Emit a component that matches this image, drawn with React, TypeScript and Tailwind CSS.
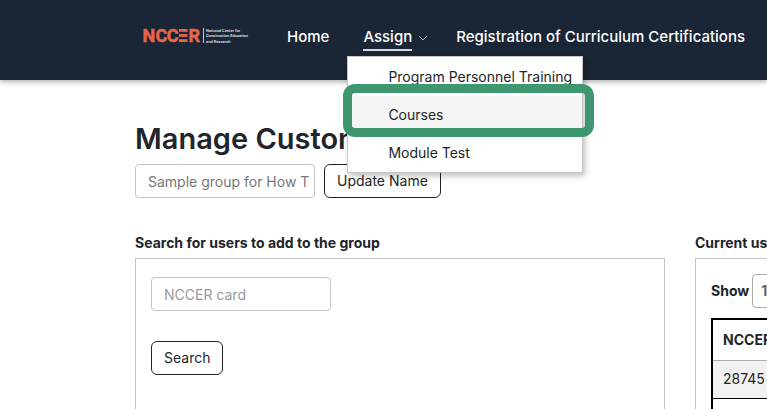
import { useState } from "react";

const ASSIGN_ITEMS = ["Program Personnel Training", "Courses", "Module Test"];

const Logo = () => (
  <svg width="108" height="28" viewBox="0 -4 108 28" role="img" aria-label="NCCER">
    <g
      fill="#e8654a"
      stroke="#e8654a"
      strokeWidth="0.5"
      fontFamily="Roboto, sans-serif"
      fontWeight="700"
      fontSize="18"
    >
      <text x="-0.5" y="17">N</text>
      <text x="12.5" y="17">C</text>
      <text x="23.8" y="17">C</text>
      <text x="45.5" y="17">R</text>
    </g>
    {/* The E is three loose bars */}
    <g fill="#e8654a">
      <rect x="36" y="4" width="8.5" height="2.8" />
      <rect x="36" y="9.1" width="8.5" height="2.8" />
      <rect x="36" y="14.2" width="8.5" height="2.8" />
    </g>
    <rect x="60" y="3" width="1" height="15" fill="#c3c8cf" />
    <g fill="#d5d9de" fontFamily="Roboto, sans-serif" fontWeight="700" fontSize="4">
      <text x="63" y="7">National Center for</text>
      <text x="63" y="12">Construction Education</text>
      <text x="63" y="18">and Research</text>
    </g>
  </svg>
);

const AssignMenu = () => (
  <div className="absolute top-[43px] -left-4 z-10 w-[236px] border border-[#c8c8c8] bg-white pt-px text-[#212529] shadow-[2px_3px_6px_rgba(0,0,0,0.25)]">
    <ul>
      {ASSIGN_ITEMS.map((item) => (
        <li key={item} className="relative">
          <a
            href="#"
            className={`flex h-[38px] items-center pl-10 text-sm font-normal whitespace-nowrap ${
              item === "Courses" ? "bg-[#f5f5f5]" : "bg-white"
            }`}
          >
            {item}
          </a>
          {item === "Courses" && (
            <span className="pointer-events-none absolute -top-3 -right-3 -bottom-[3px] -left-[5px] z-10 rounded-xl border-[9px] border-[#3f9770]" />
          )}
        </li>
      ))}
    </ul>
  </div>
);

const Header = () => {
  const [open, setOpen] = useState(true);

  return (
    <header className="relative z-10 h-20 bg-[#1a2535] pl-[143px] shadow-[0_2px_5px_rgba(0,0,0,0.3)]">
      <nav className="flex pt-[13px] text-[15px] leading-6 font-medium whitespace-nowrap text-white">
        <a href="#" className="mt-2 mr-9 h-7 w-[108px] shrink-0">
          <Logo />
        </a>
        <a href="#" className="mt-3">
          Home
        </a>
        <div className="relative ml-[34px]">
          <button
            type="button"
            className="mt-3 flex items-center gap-[6px]"
            aria-expanded={open}
            onClick={() => setOpen(!open)}
          >
            <span className="border-b-2 border-[#d5dae2]">Assign</span>
            <svg width="10" height="6" viewBox="0 0 10 6" fill="none">
              <path d="M1 1l4 4 4-4" stroke="#aeb5bf" strokeWidth="1" />
            </svg>
          </button>
          {open && <AssignMenu />}
        </div>
        <a href="#" className="mt-3 ml-7">
          Registration of Curriculum Certifications
        </a>
      </nav>
    </header>
  );
};

const SearchPanel = () => (
  <section>
    <h2 className="text-sm leading-5 font-bold">
      Search for users to add to the group
    </h2>
    <form
      className="mt-[5px] h-80 border border-[#c4c4c4] px-[15px] pt-[18px]"
      onSubmit={(e) => e.preventDefault()}
    >
      <input
        type="text"
        aria-label="NCCER card"
        placeholder="NCCER card"
        className="block h-[34px] w-[180px] rounded border border-[#c4c4c4] px-3 text-sm placeholder:text-[#999999]"
      />
      <button
        type="submit"
        className="mt-[30px] h-[34px] rounded-md border border-[#212529] px-3 text-sm"
      >
        Search
      </button>
    </form>
  </section>
);

const CurrentUsersPanel = () => (
  <section>
    <h2 className="text-sm leading-5 font-bold">Current users</h2>
    <div className="mt-[5px] h-80 border border-[#c4c4c4] px-[15px] pt-[15px]">
      <label className="flex items-center gap-[3px] text-sm font-bold">
        Show
        <select className="h-[34px] w-20 appearance-none rounded border border-[#aaaaaa] px-2 text-[#666666]">
          <option>10</option>
        </select>
      </label>
      <table className="mt-[10px] w-full border-collapse border-2 border-black text-left text-sm">
        <thead>
          <tr className="h-[41px]">
            <th className="px-[10px] font-bold">NCCER card</th>
          </tr>
        </thead>
        <tbody>
          <tr className="h-[38px] border-t border-[#aaaaaa] bg-[#f2f2f2]">
            <td className="px-[10px]">28745</td>
          </tr>
          <tr className="h-[38px] border-t border-black">
            <td className="px-[10px]"></td>
          </tr>
        </tbody>
      </table>
    </div>
  </section>
);

const App = () => {
  return (
    <div className="h-screen overflow-hidden bg-white font-['Inter',sans-serif] text-[#212529]">
      <Header />
      <main className="pl-[135px]">
        <h1 className="pt-[41px] text-[29px] leading-9 font-semibold">
          Manage Custom
        </h1>
        <form
          className="mt-[7px] flex gap-[9px]"
          onSubmit={(e) => e.preventDefault()}
        >
          <input
            type="text"
            aria-label="Group name"
            defaultValue="Sample group for How T"
            className="h-[34px] w-[180px] rounded border border-[#c4c4c4] pr-1 pl-3 text-sm text-[#777777]"
          />
          <button
            type="submit"
            className="h-[34px] rounded-md border border-[#212529] px-3 text-sm"
          >
            Update Name
          </button>
        </form>
        <div className="mt-[35px] grid min-w-[1090px] grid-cols-2 gap-[30px]">
          <SearchPanel />
          <CurrentUsersPanel />
        </div>
      </main>
    </div>
  );
};

export default App;
